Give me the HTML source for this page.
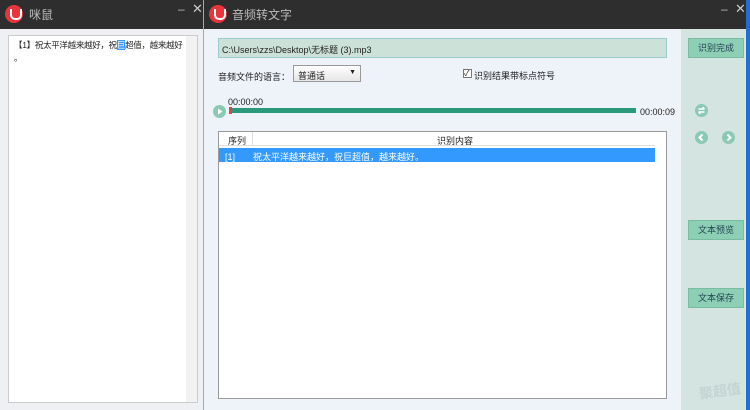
<!DOCTYPE html><html><head><meta charset="utf-8"><style>
*{margin:0;padding:0;box-sizing:border-box}
body{width:750px;height:410px;overflow:hidden;background:#eef2f9;font-family:"Liberation Sans","Noto Sans CJK SC",sans-serif;font-size:9px;color:#222;position:relative}
.abs{position:absolute}
.tb{background:#2e2e2e;height:29px;top:0}
.logo{width:18px;height:18px;border-radius:50%;background:#e8343a;top:5px}
.logo:after{content:"";position:absolute;left:5px;top:4px;width:8px;height:9px;border:2px solid #fff;border-top:none;border-radius:0 0 5px 5px}
.tt{color:#bbb;font-size:12px;top:6px}
.btn{background:#8dcfb5;border:1px solid #79bca2;color:#245;font-size:9px;text-align:center;line-height:18px;width:56px;height:20px;left:688px}
.circ{width:13px;height:13px;border-radius:50%;background:#8ac9b3}
.circ svg{position:absolute;left:0;top:0}
</style></head><body>
<div class="abs tb" style="left:0;width:204px"></div>
<div class="abs logo" style="left:5px"></div>
<div class="abs tt" style="left:29px">咪鼠</div>
<div class="abs" style="left:178px;top:2px;color:#bbb;font-size:12px">–</div>
<div class="abs" style="left:192px;top:1px;color:#ccc;font-size:13px">✕</div>
<div class="abs" style="left:0;top:29px;width:204px;height:381px;background:#eef0f4"></div>
<div class="abs" style="left:8px;top:35px;width:190px;height:368px;background:#fff;border:1px solid #ccc"></div>
<div class="abs" style="left:186px;top:36px;width:11px;height:366px;background:#f2f2f2"></div>
<div class="abs" style="left:14px;top:39px;font-size:8.5px;width:172px;line-height:13px;letter-spacing:-0.3px;white-space:nowrap">【1】祝太平洋越来越好，祝<span style="background:#3399ff;color:#fff">巨</span>超值，越来越好<br>。</div>
<div class="abs" style="left:203px;top:0;width:1px;height:410px;background:#9ab"></div>
<div class="abs tb" style="left:204px;width:546px"></div>
<div class="abs logo" style="left:209px"></div>
<div class="abs tt" style="left:232px">音频转文字</div>
<div class="abs" style="left:721px;top:2px;color:#bbb;font-size:12px">–</div>
<div class="abs" style="left:735px;top:1px;color:#ccc;font-size:13px">✕</div>
<div class="abs" style="left:681px;top:29px;width:65px;height:381px;background:#d4e4e1"></div>
<div class="abs" style="left:746px;top:0;width:4px;height:410px;background:#1f6fd0"></div>
<div class="abs" style="left:218px;top:38px;width:449px;height:20px;background:#cce2d8;border:1px solid #9cc;padding:4px 3px;font-size:9px">C:\Users\zzs\Desktop\无标题 (3).mp3</div>
<div class="abs" style="left:218px;top:70px">音频文件的语言：</div>
<div class="abs" style="left:293px;top:65px;width:68px;height:17px;border:1px solid #999;background:linear-gradient(#fff,#e6e6e6);padding:3px 4px">普通话<span style="position:absolute;right:4px;top:3px;font-size:7px">▼</span></div>
<div class="abs" style="left:463px;top:69px;width:9px;height:9px;border:1px solid #777;background:#fff;font-size:8px;line-height:8px">✓</div>
<div class="abs" style="left:474px;top:69px">识别结果带标点符号</div>
<div class="abs" style="left:228px;top:97px">00:00:00</div>
<div class="abs circ" style="left:213px;top:105px"><svg width="13" height="13"><path d="M5 3.5L9.5 6.5L5 9.5Z" fill="#fff"/></svg></div>
<div class="abs" style="left:229px;top:108px;width:407px;height:5px;background:#2a9a7a"></div>
<div class="abs" style="left:229px;top:107px;width:3px;height:7px;background:#d44"></div>
<div class="abs" style="left:640px;top:107px">00:00:09</div>
<div class="abs" style="left:218px;top:131px;width:449px;height:268px;background:#fff;border:1px solid #999"></div>
<div class="abs" style="left:219px;top:132px;width:436px;height:14px;background:#fff;border-bottom:1px solid #ddd"></div>
<div class="abs" style="left:252px;top:132px;width:1px;height:14px;background:#ddd"></div>
<div class="abs" style="left:228px;top:134px">序列</div>
<div class="abs" style="left:437px;top:134px">识别内容</div>
<div class="abs" style="left:219px;top:148px;width:436px;height:14px;background:#3399ff;color:#fff;padding:2px 0 0 6px">[1]<span style="margin-left:18px">祝太平洋越来越好，祝巨超值，越来越好。</span></div>
<div class="abs btn" style="top:38px">识别完成</div>
<div class="abs btn" style="top:220px">文本预览</div>
<div class="abs btn" style="top:288px">文本保存</div>
<div class="abs circ" style="left:695px;top:104px"><svg width="13" height="13"><path d="M3.5 5H9.5M7.5 3L9.5 5M9.5 8H3.5M5.5 10L3.5 8" stroke="#fff" stroke-width="1.5" fill="none"/></svg></div>
<div class="abs circ" style="left:695px;top:131px"><svg width="13" height="13"><path d="M7.5 3.5L4.5 6.5L7.5 9.5" stroke="#fff" stroke-width="2" fill="none"/></svg></div>
<div class="abs circ" style="left:722px;top:131px"><svg width="13" height="13"><path d="M5.5 3.5L8.5 6.5L5.5 9.5" stroke="#fff" stroke-width="2" fill="none"/></svg></div>
<div class="abs" style="left:699px;top:381px;color:#c4d4d2;font-size:14px;font-weight:bold;transform:rotate(-8deg)">聚超值</div>
</body></html>
